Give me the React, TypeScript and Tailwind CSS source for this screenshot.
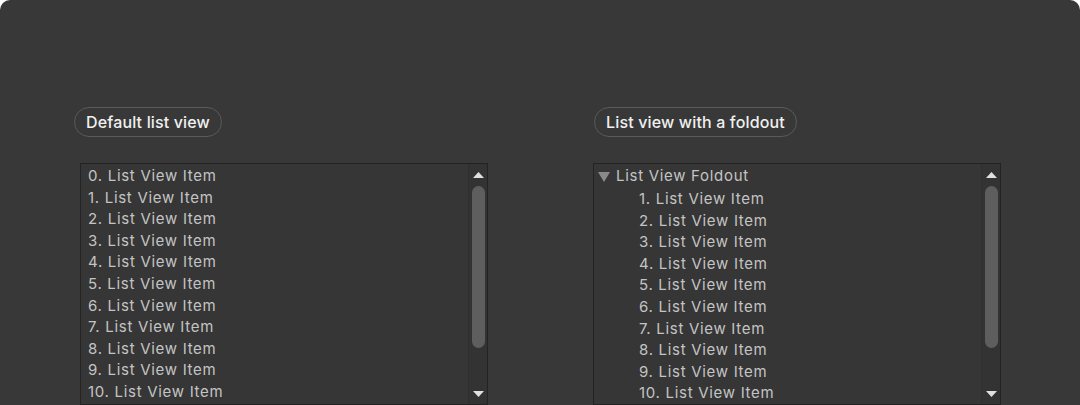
const items = Array.from({ length: 11 }, (_, i) => `${i}. List View Item`);

function ScrollBar() {
  return (
    <div className="flex w-[19px] shrink-0 flex-col items-center border-l border-[#2f2f2f] bg-[#333333]">
      <svg width="11" height="6" viewBox="0 0 11 6" className="mt-[8px]">
        <path d="M0 6 L5.5 0 L11 6 Z" fill="#e0e0e0" />
      </svg>
      <div className="mt-[8px] h-[162px] w-[13px] rounded-full bg-[#5e5e5e]" />
      <div className="flex-1" />
      <svg width="11" height="6" viewBox="0 0 11 6" className="mb-[7px]">
        <path d="M0 0 L11 0 L5.5 6 Z" fill="#e0e0e0" />
      </svg>
    </div>
  );
}

function Pill({ label }: { label: string }) {
  return (
    <div className="inline-flex h-[30px] items-center rounded-full border border-[#5a5a5a] px-[11px] text-[16px] font-medium tracking-[0.15px] text-[#f0f0f0]">
      {label}
    </div>
  );
}

export default function App() {
  return (
    <div
      className="flex h-[405px] w-[1080px] items-start overflow-hidden rounded-t-[10px] bg-[#383838]"
      style={{ fontFamily: "Inter, 'Noto Sans', sans-serif" }}
    >
      {/* DEFAULT LIST */}
      <div className="ml-[74px] mt-[107px] flex flex-col items-start">
        <Pill label="Default list view" />
        <div className="ml-[6px] mt-[26px] flex h-[242px] w-[408px] border border-[#232323] bg-[#363636]">
          <div className="flex-1 pl-[7px] pt-[1px] text-[15px] leading-[21.6px] tracking-[0.7px] text-[#c4c4c4]">
            {items.map((t) => (
              <div key={t}>{t}</div>
            ))}
          </div>
          <ScrollBar />
        </div>
      </div>

      {/* FOLDOUT LIST */}
      <div className="ml-[105px] mt-[107px] flex flex-col items-start">
        <div className="ml-[1px]">
          <Pill label="List view with a foldout" />
        </div>
        <div className="mt-[26px] flex h-[242px] w-[408px] border border-[#232323] bg-[#363636]">
          <div className="flex-1 pt-[1px] text-[15px] tracking-[0.7px] text-[#c4c4c4]">
            <div className="flex h-[23px] items-center pl-[4px]">
              <svg width="12" height="10" viewBox="0 0 12 10" className="mr-[6px]">
                <path d="M0 0 L12 0 L6 10 Z" fill="#8a8a8a" />
              </svg>
              List View Foldout
            </div>
            <div className="pl-[45px] leading-[21.6px]">
              {items.slice(1).map((t) => (
                <div key={t}>{t}</div>
              ))}
            </div>
          </div>
          <ScrollBar />
        </div>
      </div>
    </div>
  );
}
